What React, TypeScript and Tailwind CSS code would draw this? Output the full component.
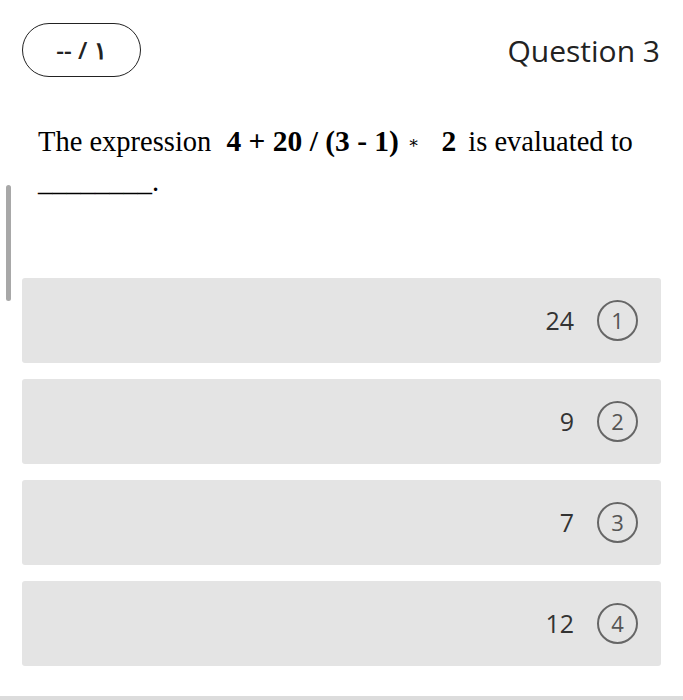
import React from "react";

const options = [
  { label: "24", n: 1 },
  { label: "9", n: 2 },
  { label: "7", n: 3 },
  { label: "12", n: 4 },
];

export default function App() {
  return (
    <div className="relative w-[683px] h-[700px] bg-white overflow-hidden font-['Open_Sans',sans-serif]">
      {/* scroll thumb */}
      <div className="absolute left-[6px] top-[185px] w-[5px] h-[116px] rounded-full bg-[#a8a8a8]" />

      <div className="flex items-center justify-between pl-[22px] pr-[23px] pt-[23px]">
        <div className="flex items-center justify-center w-[119px] h-[54px] rounded-full border-[1.5px] border-[#222] text-[24px] font-semibold text-[#222]">
          <span dir="ltr" className="tracking-[1.5px]">
            --&nbsp;/&nbsp;١
          </span>
        </div>
        <h1 className="text-[30px] text-[#222]">Question 3</h1>
      </div>

      <p className="mt-[44px] pl-[38px] pr-[30px] font-['Liberation_Serif',serif] text-[28.5px] leading-[40px] text-black">
        The expression <b className="ml-[8px] text-[29.5px]">4 + 20 / (3 - 1)</b>
        <span className="ml-[9px] font-['DejaVu_Serif',serif] text-[17px] align-[3px]">∗</span>
        <b className="ml-[22px] text-[29.5px]">2</b>
        <span className="ml-[12px]">is evaluated to ________.</span>
      </p>

      <div className="mt-[76px] px-[22px] flex flex-col gap-[16px]">
        {options.map((o) => (
          <div
            key={o.n}
            className="h-[85px] rounded-[3px] bg-[#e4e4e4] flex items-center justify-end pr-[23px] gap-[23px]"
          >
            <span className="text-[25px] text-[#333]">{o.label}</span>
            <span className="w-[41px] h-[41px] rounded-full border-2 border-[#666] flex items-center justify-center text-[22px] text-[#555]">
              {o.n}
            </span>
          </div>
        ))}
      </div>

      <div className="absolute left-0 bottom-0 w-full h-[4px] bg-[#dcdcdc]" />
    </div>
  );
}
